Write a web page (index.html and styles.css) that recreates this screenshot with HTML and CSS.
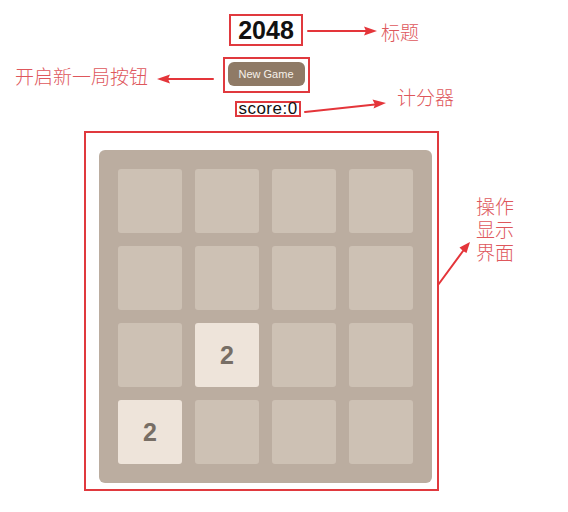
FILE: index.html
```html
<!DOCTYPE html>
<html lang="zh-CN">
<head>
<meta charset="utf-8">
<title>2048</title>
<link rel="stylesheet" href="styles.css">
</head>
<body>
<div class="page">
  <main class="app">
    <div class="mark title-box"><h1 class="title">2048</h1></div>
    <div class="mark button-box"><button class="new-game" type="button">New Game</button></div>
    <div class="mark score-box"><span class="score">score:0</span></div>
    <div class="mark board-box">
      <div class="board">
        <div class="cell"></div><div class="cell"></div><div class="cell"></div><div class="cell"></div>
        <div class="cell"></div><div class="cell"></div><div class="cell"></div><div class="cell"></div>
        <div class="cell"></div><div class="cell tile-2">2</div><div class="cell"></div><div class="cell"></div>
        <div class="cell tile-2">2</div><div class="cell"></div><div class="cell"></div><div class="cell"></div>
      </div>
    </div>
  </main>

  <!-- callout arrows -->
  <svg class="arrows" width="568" height="512" viewBox="0 0 568 512" aria-hidden="true">
    <g stroke="#e4353a" stroke-width="2" stroke-linecap="round">
      <line x1="308" y1="31" x2="366" y2="31"/>
      <line x1="213" y1="79" x2="168" y2="79"/>
      <line x1="305" y1="112" x2="375" y2="104.5"/>
      <line x1="438" y1="285" x2="463" y2="251"/>
    </g>
    <g fill="#e4353a">
      <polygon points="377,31 364,26.5 366,31 364,35.5"/>
      <polygon points="157,79 170,74.5 168,79 170,83.5"/>
      <polygon points="386,103 372.5,99.5 375,104.5 373.5,108.5"/>
      <polygon points="470,242 459.5,247.5 463,251 466.5,253"/>
    </g>
  </svg>

  <span class="note note-title">标题</span>
  <span class="note note-new">开启新一局按钮</span>
  <span class="note note-score">计分器</span>
  <div class="note note-board">
    <span class="note-line">操作</span>
    <span class="note-line">显示</span>
    <span class="note-line">界面</span>
  </div>
</div>
</body>
</html>
```

FILE: styles.css
```css
* {
  box-sizing: border-box;
}

html, body {
  margin: 0;
  padding: 0;
  background: #ffffff;
}

.page {
  position: relative;
  width: 568px;
  height: 512px;
  overflow: hidden;
}

/* game column */
.app {
  width: 364px;
  margin-left: 84px;
  padding-top: 14px;
  display: flex;
  flex-direction: column;
  align-items: center;
  font-family: "Liberation Sans", Arial, sans-serif;
}

.mark {
  border: 2px solid #e0393e;
}

.title-box {
  width: 74px;
  height: 32px;
  display: flex;
  align-items: center;
  justify-content: center;
}

.title {
  margin: 0;
  font-size: 25px;
  font-weight: bold;
  line-height: 1;
  color: #111111;
}

.button-box {
  margin-top: 11px;
  width: 87px;
  height: 36px;
  display: flex;
  align-items: center;
  justify-content: center;
  padding-bottom: 2px;
}

.new-game {
  width: 77px;
  height: 24px;
  border: none;
  border-radius: 6px;
  background: #8f7a66;
  color: #f6f1ea;
  font-family: "Liberation Sans", Arial, sans-serif;
  font-size: 11px;
  padding: 0;
}

.score-box {
  margin-top: 8px;
  margin-left: 4px;
  width: 66px;
  height: 16px;
  display: flex;
  align-items: center;
  justify-content: center;
}

.score {
  font-size: 17px;
  line-height: 12px;
  letter-spacing: 0.5px;
  color: #111111;
}

.board-box {
  align-self: flex-start;
  margin-top: 14px;
  width: 355px;
  height: 360px;
  padding: 17px 4px 6px 13px;
}

.board {
  width: 333px;
  height: 333px;
  padding: 19px;
  background: #bbada0;
  border-radius: 6px;
  display: grid;
  grid-template-columns: repeat(4, 64px);
  grid-template-rows: repeat(4, 64px);
  gap: 13px;
}

.cell {
  background: #cdc1b4;
  border-radius: 3px;
  display: flex;
  align-items: center;
  justify-content: center;
  font-size: 25px;
  font-weight: bold;
  color: #776e65;
}

.tile-2 {
  background: #eee4da;
}

/* callouts */
.arrows {
  position: absolute;
  left: 0;
  top: 0;
  pointer-events: none;
}

.note {
  position: absolute;
  font-family: "Noto Sans CJK SC", "Noto Sans", sans-serif;
  font-size: 19px;
  font-weight: 300;
  line-height: 19px;
  color: #de575c;
  white-space: nowrap;
}

.note-title {
  left: 381px;
  top: 22px;
}

.note-new {
  left: 15px;
  top: 66px;
}

.note-score {
  left: 397px;
  top: 87px;
}

.note-board {
  left: 476px;
  top: 196px;
  display: flex;
  flex-direction: column;
  gap: 4px;
}

.note-line {
  display: block;
  height: 19px;
}
```
